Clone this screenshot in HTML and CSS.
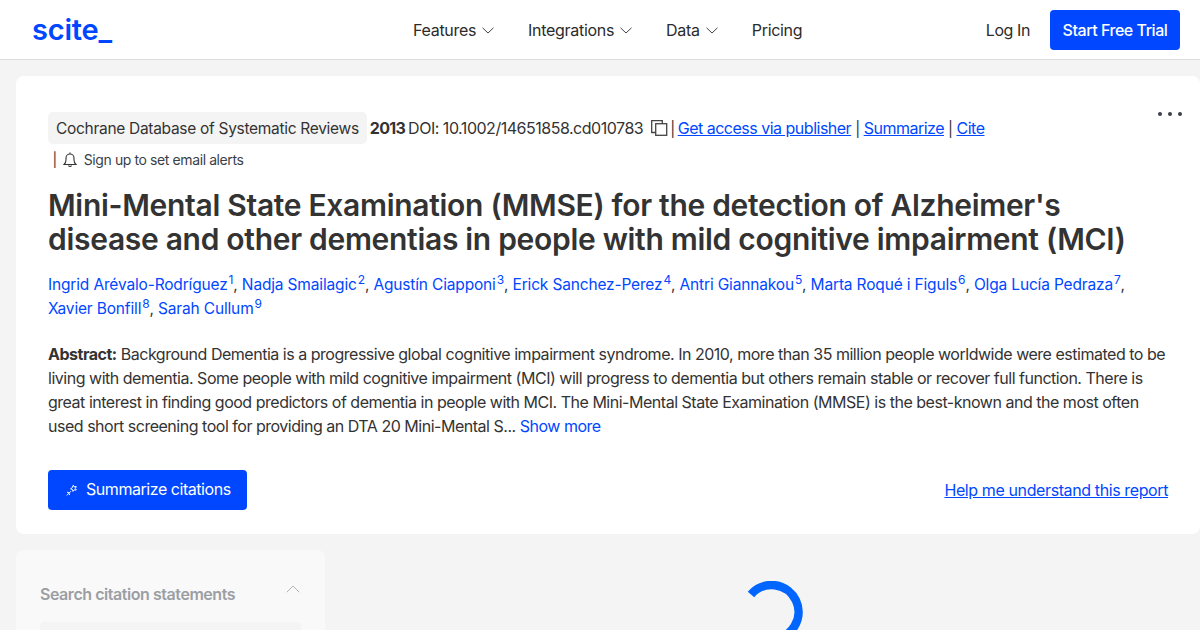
FILE: index.html
```html
<!DOCTYPE html>
<html lang="en">
<head>
<meta charset="utf-8">
<title>scite</title>
<link rel="stylesheet" href="styles.css">
</head>
<body>
<header class="topbar">
  <a class="logo">scite_</a>
  <nav class="nav">
    <a class="nav-item">Features <svg class="chev" viewBox="0 0 12 7"><path d="M.5.8 6 6 11.500.8"/></svg></a>
    <a class="nav-item">Integrations <svg class="chev" viewBox="0 0 12 7"><path d="M.5.8 6 6 11.500.8"/></svg></a>
    <a class="nav-item">Data <svg class="chev" viewBox="0 0 12 7"><path d="M.5.8 6 6 11.500.8"/></svg></a>
    <a class="nav-item">Pricing</a>
  </nav>
  <div class="actions">
    <a class="login">Log In</a>
    <a class="trial">Start Free Trial</a>
  </div>
</header>
<main class="page">
  <section class="card">
    <div class="dots"><i></i><i></i><i></i></div>
    <div class="meta">
      <span class="journal">Cochrane Database of Systematic Reviews</span>
      <b class="year">2013</b>
      <span class="doi">DOI: 10.1002/14651858.cd010783</span>
      <svg class="copy" viewBox="0 0 17 16"><path d="M4.500 12.500H.7V.7h10.600v3"/><rect x="4.700" y="3.700" width="11" height="11.600"/></svg>
      <span class="sep first">|</span><a class="link">Get access via publisher</a>
      <span class="sep">|</span><a class="link">Summarize</a>
      <span class="sep">|</span><a class="link">Cite</a>
    </div>
    <div class="alerts">
      <span class="bar">|</span>
      <svg class="bell" viewBox="0 0 14 16"><path d="M1 12.500h12c-1.400-1.200-2-2-2-4.500V6a4 4 0 0 0-8 0v2c0 2.500-.6 3.300-2 4.500ZM5.500 13.500a1.600 1.600 0 0 0 3 0M7 2V.6"/></svg>
      <span>Sign up to set email alerts</span>
    </div>
    <h1 class="title">Mini-Mental State Examination (MMSE) for the detection of Alzheimer's disease and other dementias in people with mild cognitive impairment (MCI)</h1>
    <p class="authors">
      <a>Ingrid Arévalo-Rodríguez<sup>1</sup></a>, <a>Nadja Smailagic<sup>2</sup></a>, <a>Agustín Ciapponi<sup>3</sup></a>, <a>Erick Sanchez-Perez<sup>4</sup></a>, <a>Antri Giannakou<sup>5</sup></a>, <a>Marta Roqué i Figuls<sup>6</sup></a>, <a>Olga Lucía Pedraza<sup>7</sup></a>, <a>Xavier Bonfill<sup>8</sup></a>, <a>Sarah Cullum<sup>9</sup></a>
    </p>
    <p class="abstract"><b>Abstract:</b> Background Dementia is a progressive global cognitive impairment syndrome. In 2010, more than 35 million people worldwide were estimated to be living with dementia. Some people with mild cognitive impairment (MCI) will progress to dementia but others remain stable or recover full function. There is great interest in finding good predictors of dementia in people with MCI. The Mini-Mental State Examination (MMSE) is the best-known and the most often used short screening tool for providing an DTA 20 Mini-Mental S... <a class="more">Show more</a></p>
    <div class="card-foot">
      <a class="summarize">
        <svg class="wand" viewBox="0 0 12 12"><path d="M.8 11.400 5 7.200M1 8.200l1.800.4M3.600 11l-.4-1.600"/><path d="m7.300 1.200.8 1.700 2.200-.3-1 1.800 1 1.600-2.100-.1-1.200 1.500-.6-1.900-1.800-.7 1.700-1.100Z"/></svg>
        <span class="summarize-label">Summarize citations</span>
      </a>
      <a class="help">Help me understand this report</a>
    </div>
  </section>
  <div class="lower">
    <aside class="side">
      <div class="side-head">
        <span>Search citation statements</span>
        <svg class="chev-up" viewBox="0 0 14 8"><path d="M.8 7.200 7 1l6.200 6.200"/></svg>
      </div>
      <div class="side-input"></div>
    </aside>
    <div class="loading">
      <svg class="spinner" viewBox="0 0 62 62"><path d="M10 13.500A27 27 0 1 1 31 58"/></svg>
    </div>
  </div>
</main>
</body>
</html>
```
FILE: styles.css
```css
* { box-sizing: border-box; }
html, body { margin: 0; height: 630px; overflow: hidden; }
body {
  background: #f4f4f4;
  color: #333;
  font-family: Inter, "Liberation Sans", sans-serif;
  font-size: 16px;
}
a { cursor: pointer; }
.topbar {
  height: 60px;
  background: #fff;
  border-bottom: 1px solid #ddd;
  display: flex;
  align-items: center;
  padding: 0 20px 0 32px;
}
.logo {
  color: #0047ff;
  font-weight: 600;
  font-size: 29px;
  letter-spacing: -.2px;
  width: 381px;
}
.nav { display: flex; gap: 34px; font-size: 16px; color: #2b2b2b; letter-spacing: -.3px; }
.nav-item { display: flex; align-items: center; gap: 6px; }
.chev { width: 12px; height: 7px; fill: none; stroke: #444; stroke-width: 1; margin-top: 2px; }
.actions { margin-left: auto; display: flex; align-items: center; gap: 20px; }
.login { color: #2b2b2b; letter-spacing: -.42px; }
.trial {
  background: #0047ff;
  color: #fff;
  height: 40px;
  width: 130px;
  border-radius: 4px;
  display: flex;
  align-items: center;
  justify-content: center;
  font-weight: 500;
  letter-spacing: -.46px;
}
.page { padding: 16px 0 0 16px; }
.card {
  position: relative;
  background: #fff;
  border-radius: 8px;
  height: 458px;
  padding: 36px 32px 0;
}
.dots { position: absolute; top: 36px; right: 18px; display: flex; gap: 6px; }
.dots i { width: 4px; height: 4px; border-radius: 50%; background: #3c4048; }
.meta { display: flex; align-items: center; height: 32px; white-space: nowrap; letter-spacing: -.48px; }
.journal {
  background: #f4f4f4;
  border-radius: 5px;
  padding: 0 8px;
  height: 32px;
  line-height: 33px;
  margin-right: 3px;
  letter-spacing: -.3px;
  font-size: 15.500px;
}
.year { font-weight: 700; margin-right: 3px; letter-spacing: -.7px; }
.copy { width: 17px; height: 16px; fill: none; stroke: #444; stroke-width: 1.300; margin: 0 0 0 8px; }
.sep { margin: 0 4px; font-size: 15px; }
.sep.first { margin: 0 3px 0 2px; }
.link, .authors a, .more, .help { color: #0047ff; }
.link, .help { text-decoration: underline; }
.link { letter-spacing: -.5px; }
.alerts { display: flex; align-items: center; height: 31px; font-size: 14px; letter-spacing: -.4px; color: #3a3f47; margin-left: 4.400px; }
.bar { color: #333; margin-right: 6.300px; }
.bell { width: 14px; height: 16px; fill: none; stroke: #333; stroke-width: 1.100; margin-right: 6.800px; }
.title {
  margin: 13px 0 0;
  font-size: 30px;
  line-height: 34px;
  font-weight: 600;
  letter-spacing: -.3px;
  color: #333;
}
.authors { margin: 17px 0 0; font-size: 15.500px; line-height: 24px; letter-spacing: -.16px; color: #333; }
.authors sup { font-size: 12px; line-height: 0; margin-left: 1px; vertical-align: 6px; }
.abstract { margin: 21px 0 0; font-size: 16px; line-height: 24px; letter-spacing: -.48px; }
.abstract b { font-weight: 700; }
.card-foot { display: flex; align-items: center; justify-content: space-between; margin-top: 32px; }
.summarize {
  background: #0047ff;
  color: #fff;
  height: 40px;
  width: 199px;
  border-radius: 4px;
  display: flex;
  align-items: center;
  padding-left: 18px;
  gap: 8px;
  letter-spacing: -.45px;
}
.summarize-label { margin-top: -2px; }
.wand { width: 12px; height: 12px; fill: none; stroke: #fff; stroke-width: 1; }
.help { letter-spacing: -.39px; }
.lower { display: flex; margin-top: 16px; }
.side {
  width: 309px;
  height: 80px;
  background: #f9f9f9;
  border-radius: 8px 8px 0 0;
  padding: 34px 24px 0;
  overflow: hidden;
}
.side-head { display: flex; justify-content: space-between; font-weight: 600; color: #9b9ea3; font-size: 16px; letter-spacing: -.45px; height: 38px; }
.chev-up { width: 14px; height: 8px; fill: none; stroke: #b4b4b4; stroke-width: 1; margin: 1px 1px 0 0; }
.side-input { height: 8px; background: #f4f4f4; border-radius: 4px 4px 0 0; }
.loading { flex: 1; height: 80px; overflow: hidden; padding: 31px 0 0 416px; }
.spinner { display: block; width: 62px; height: 62px; fill: none; stroke: #06f; stroke-width: 8.500; }
```
